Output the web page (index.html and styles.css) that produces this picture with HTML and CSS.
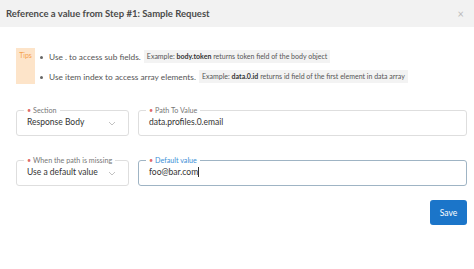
FILE: index.html
```html
<!DOCTYPE html>
<html lang="en">

<head>
    <meta charset="UTF-8">
    <meta name="viewport" content="width=device-width, initial-scale=1.0">
    <title>Reference a value</title>
    <link rel="stylesheet" href="styles.css">
</head>

<body>

    <!-- Modal header -->
    <div class="modal-header">
        <h2>Reference a value from Step #1: Sample Request</h2>
        <span class="close">&times;</span>
    </div>

    <!-- Tips -->
    <div class="tips">
        <div class="tips-label">Tips</div>
        <ul class="tips-list">
            <li>Use . to access sub fields.
                <span class="chip">Example: <b>body.token</b> returns token field of the body object</span>
            </li>
            <li>Use item index to access array elements.
                <span class="chip">Example: <b>data.0.id</b> returns id field of the first element in data array</span>
            </li>
        </ul>
    </div>

    <!-- Form -->
    <form class="ref-form">
        <div class="form-row">
            <fieldset class="field">
                <legend><span class="req">&bull;</span> Section</legend>
                <div class="value">Response Body</div>
                <svg class="chevron" width="8" height="5" viewBox="0 0 8 5">
                    <path d="M1 1l3 3 3-3" fill="none" stroke="#bbb" stroke-width="0.9" />
                </svg>
            </fieldset>
            <fieldset class="field">
                <legend><span class="req">&bull;</span> Path To Value</legend>
                <div class="value">data.profiles.0.email</div>
            </fieldset>
        </div>

        <div class="form-row">
            <fieldset class="field">
                <legend><span class="req">&bull;</span> When the path is missing</legend>
                <div class="value">Use a default value</div>
                <svg class="chevron" width="8" height="5" viewBox="0 0 8 5">
                    <path d="M1 1l3 3 3-3" fill="none" stroke="#bbb" stroke-width="0.9" />
                </svg>
            </fieldset>
            <fieldset class="field focused">
                <legend><span class="req">&bull;</span> Default value</legend>
                <div class="value">foo@bar.com<span class="caret"></span></div>
            </fieldset>
        </div>

        <div class="actions">
            <button type="button">Save</button>
        </div>
    </form>

</body>

</html>
```

FILE: styles.css
```css
/* General Styles */
html,
body {
    margin: 0;
    background-color: #ffffff;
    font-family: Lato, "Open Sans", sans-serif;
    color: #444;
}

.modal-header {
    height: 27px;
    background-color: #f2f2f2;
    display: flex;
    align-items: center;
    justify-content: space-between;
    padding: 0 10px 0 6px;
}

.modal-header h2 {
    margin: 0;
    font-size: 9.5px;
    font-weight: 700;
    color: #4a4a4a;
}

.close {
    font-size: 11px;
    color: #bbb;
}

/* Tips */
.tips {
    display: flex;
    margin: 21px 0 0 16px;
}

.tips-label {
    width: 19px;
    height: 36px;
    background-color: #fde4c9;
    color: #f5a04c;
    font-size: 7px;
    text-align: center;
    padding-top: 3px;
    box-sizing: border-box;
}

.tips-list {
    list-style: none;
    margin: 0 0 0 5px;
    padding: 0;
}

.tips-list li {
    position: relative;
    height: 14px;
    line-height: 14px;
    font-size: 8.3px;
    color: #555;
    padding-left: 9px;
    margin-top: 2px;
    margin-bottom: 6px;
}

.tips-list li::before {
    content: "";
    position: absolute;
    left: 0;
    top: 6px;
    width: 3px;
    height: 3px;
    border-radius: 50%;
    background-color: #666;
}

.chip {
    display: inline-block;
    background-color: #f3f3f3;
    font-size: 7px;
    line-height: 13px;
    padding: 0 3px;
    margin-left: 1px;
    color: #555;
    vertical-align: top;
}

.chip b {
    color: #333;
}

/* Form */
.ref-form {
    padding: 0 7px 0 16px;
    margin-top: 16px;
}

.form-row {
    display: grid;
    grid-template-columns: 113px 1fr;
    gap: 9px;
    margin-bottom: 20px;
}

.field {
    position: relative;
    margin: 0;
    padding: 0 10px 6px;
    border: 1px solid #dedede;
    border-radius: 3px;
    min-width: 0;
}

.field legend {
    font-size: 7.2px;
    line-height: 9px;
    color: #777;
    padding: 0 3px;
    margin-left: -3px;
}

.req {
    color: #e06a6a;
}

.value {
    font-size: 8.5px;
    line-height: 14px;
    color: #333;
    white-space: nowrap;
}

.chevron {
    position: absolute;
    right: 12px;
    top: 6px;
}

.focused {
    border-color: #9fb4c4;
}

.focused legend {
    color: #3d8fd6;
}

.caret {
    display: inline-block;
    width: 1px;
    height: 10px;
    background-color: #333;
    vertical-align: -2px;
}

.actions {
    display: flex;
    justify-content: flex-end;
    margin-top: -6px;
}

button {
    width: 37px;
    height: 25px;
    background-color: #1b75c9;
    color: white;
    border: none;
    border-radius: 3px;
    font-family: Lato, sans-serif;
    font-size: 8.5px;
    cursor: pointer;
    padding: 0;
}
```
